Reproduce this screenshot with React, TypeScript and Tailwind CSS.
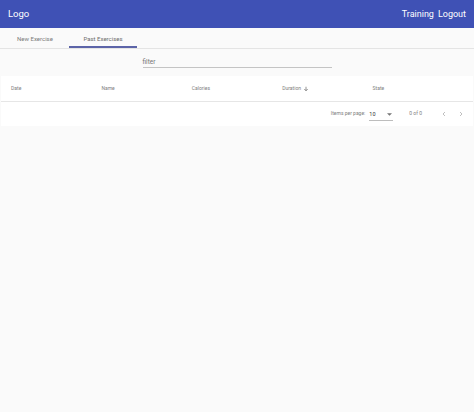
import React from "react";

export default function App() {
  const cols = ["Date", "Name", "Calories", "Duration", "State"];
  return (
    <div className="w-[474px] h-[412px] bg-[#fafafa] flex flex-col overflow-hidden" style={{ fontFamily: "Roboto, 'Liberation Sans', sans-serif" }}>
      <header className="h-[28px] bg-[#3f51b5] text-white flex items-center justify-between pl-[8px] pr-[8px] shrink-0">
        <span className="text-[9.5px] leading-none">Logo</span>
        <nav className="flex gap-[4px] text-[9px] leading-none">
          <span>Training</span>
          <span>Logout</span>
        </nav>
      </header>
      <div className="h-[21px] flex border-b border-[#e4e4e4] shrink-0">
        <div className="w-[68px] ml-[1px] flex items-center justify-center text-[6px] text-[#7a7a7a]">New Exercise</div>
        <div className="w-[68px] flex items-center justify-center text-[6px] text-[#6d6d6d] relative">
          Past Exercises
          <div className="absolute left-0 right-0 bottom-0 h-[2px] bg-[#5c64a8]" />
        </div>
      </div>
      <div className="h-[27px] flex justify-center items-start pt-[10px] shrink-0">
        <div className="w-[189px] border-b border-[#c4c4c4] pb-[1px] text-[6.5px] text-[#757575] leading-none">filter</div>
      </div>
      <div className="bg-white mx-[1px]">
        <div className="h-[26px] grid grid-cols-5 px-[10px] border-b border-[#e6e6e6] items-center">
          {cols.map((c) => (
            <div key={c} className="text-[5px] text-[#808080] flex items-center gap-[2px] pt-[1px]">
              {c}
              {c === "Duration" && (
                <svg width="6" height="6" viewBox="0 0 24 24" className="text-[#555]">
                  <path d="M12 3v16M5 12l7 7 7-7" stroke="currentColor" strokeWidth="2.5" fill="none" />
                </svg>
              )}
            </div>
          ))}
        </div>
        <div className="h-[24px] flex items-center justify-end pr-[8px] text-[5px] text-[#808080]">
          <span>Items per page:</span>
          <div className="ml-[4px] w-[24px] flex items-center justify-between border-b border-[#bdbdbd] pb-[1px] mt-[3px] text-[#333] text-[5.5px]">
            <span>10</span>
            <svg width="5" height="3" viewBox="0 0 10 5" className="mr-[1px]">
              <path d="M0 0l5 5 5-5z" fill="#757575" />
            </svg>
          </div>
          <span className="ml-[16px]">0 of 0</span>
          <svg width="8" height="8" viewBox="0 0 24 24" className="ml-[18px]">
            <path d="M15 6l-6 6 6 6" stroke="#a0a0a0" strokeWidth="2" fill="none" />
          </svg>
          <svg width="8" height="8" viewBox="0 0 24 24" className="ml-[9px]">
            <path d="M9 6l6 6-6 6" stroke="#a0a0a0" strokeWidth="2" fill="none" />
          </svg>
        </div>
      </div>
      <div className="flex-1" />
    </div>
  );
}
